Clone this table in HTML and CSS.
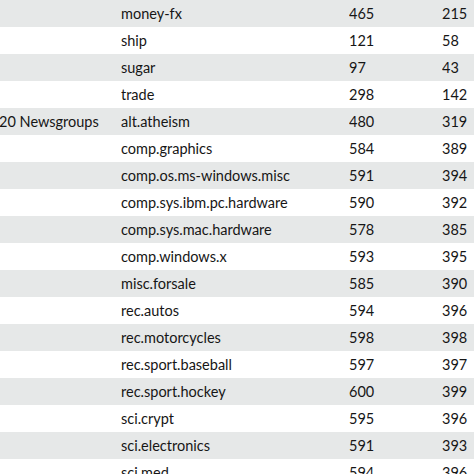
FILE: index.html
```html
<!DOCTYPE html>
<html>
<head>
<meta charset="utf-8">
<link rel="stylesheet" href="styles.css">
</head>
<body>
<table class="data">
<tbody>
<tr class="odd"><td class="c1"></td><td class="c2">money-fx</td><td class="c3">465</td><td class="c4">215</td></tr>
<tr><td class="c1"></td><td class="c2">ship</td><td class="c3">121</td><td class="c4">58</td></tr>
<tr class="odd"><td class="c1"></td><td class="c2">sugar</td><td class="c3">97</td><td class="c4">43</td></tr>
<tr><td class="c1"></td><td class="c2">trade</td><td class="c3">298</td><td class="c4">142</td></tr>
<tr class="odd"><td class="c1">20 Newsgroups</td><td class="c2">alt.atheism</td><td class="c3">480</td><td class="c4">319</td></tr>
<tr><td class="c1"></td><td class="c2">comp.graphics</td><td class="c3">584</td><td class="c4">389</td></tr>
<tr class="odd"><td class="c1"></td><td class="c2">comp.os.ms-windows.misc</td><td class="c3">591</td><td class="c4">394</td></tr>
<tr><td class="c1"></td><td class="c2">comp.sys.ibm.pc.hardware</td><td class="c3">590</td><td class="c4">392</td></tr>
<tr class="odd"><td class="c1"></td><td class="c2">comp.sys.mac.hardware</td><td class="c3">578</td><td class="c4">385</td></tr>
<tr><td class="c1"></td><td class="c2">comp.windows.x</td><td class="c3">593</td><td class="c4">395</td></tr>
<tr class="odd"><td class="c1"></td><td class="c2">misc.forsale</td><td class="c3">585</td><td class="c4">390</td></tr>
<tr><td class="c1"></td><td class="c2">rec.autos</td><td class="c3">594</td><td class="c4">396</td></tr>
<tr class="odd"><td class="c1"></td><td class="c2">rec.motorcycles</td><td class="c3">598</td><td class="c4">398</td></tr>
<tr><td class="c1"></td><td class="c2">rec.sport.baseball</td><td class="c3">597</td><td class="c4">397</td></tr>
<tr class="odd"><td class="c1"></td><td class="c2">rec.sport.hockey</td><td class="c3">600</td><td class="c4">399</td></tr>
<tr><td class="c1"></td><td class="c2">sci.crypt</td><td class="c3">595</td><td class="c4">396</td></tr>
<tr class="odd"><td class="c1"></td><td class="c2">sci.electronics</td><td class="c3">591</td><td class="c4">393</td></tr>
<tr><td class="c1"></td><td class="c2">sci.med</td><td class="c3">594</td><td class="c4">396</td></tr>
</tbody>
</table>
</body>
</html>
```
FILE: styles.css
```css
html, body {
  margin: 0;
  padding: 0;
  background: #ffffff;
  overflow: hidden;
}
.data {
  border-collapse: collapse;
  table-layout: fixed;
  width: 474px;
  font-family: "Lato", "Liberation Sans", sans-serif;
  font-size: 14.5px;
  color: #161616;
}
.data td {
  height: 27px;
  padding: 0;
  white-space: nowrap;
  overflow: hidden;
  vertical-align: middle;
  line-height: 27px;
}
.data tr.odd td {
  background: #e6e8e8;
}
.c1 { width: 121px; text-indent: -1px; }
.c2 { width: 228px; }
.c3 { width: 93px; }
.c4 { width: 32px; }
```
